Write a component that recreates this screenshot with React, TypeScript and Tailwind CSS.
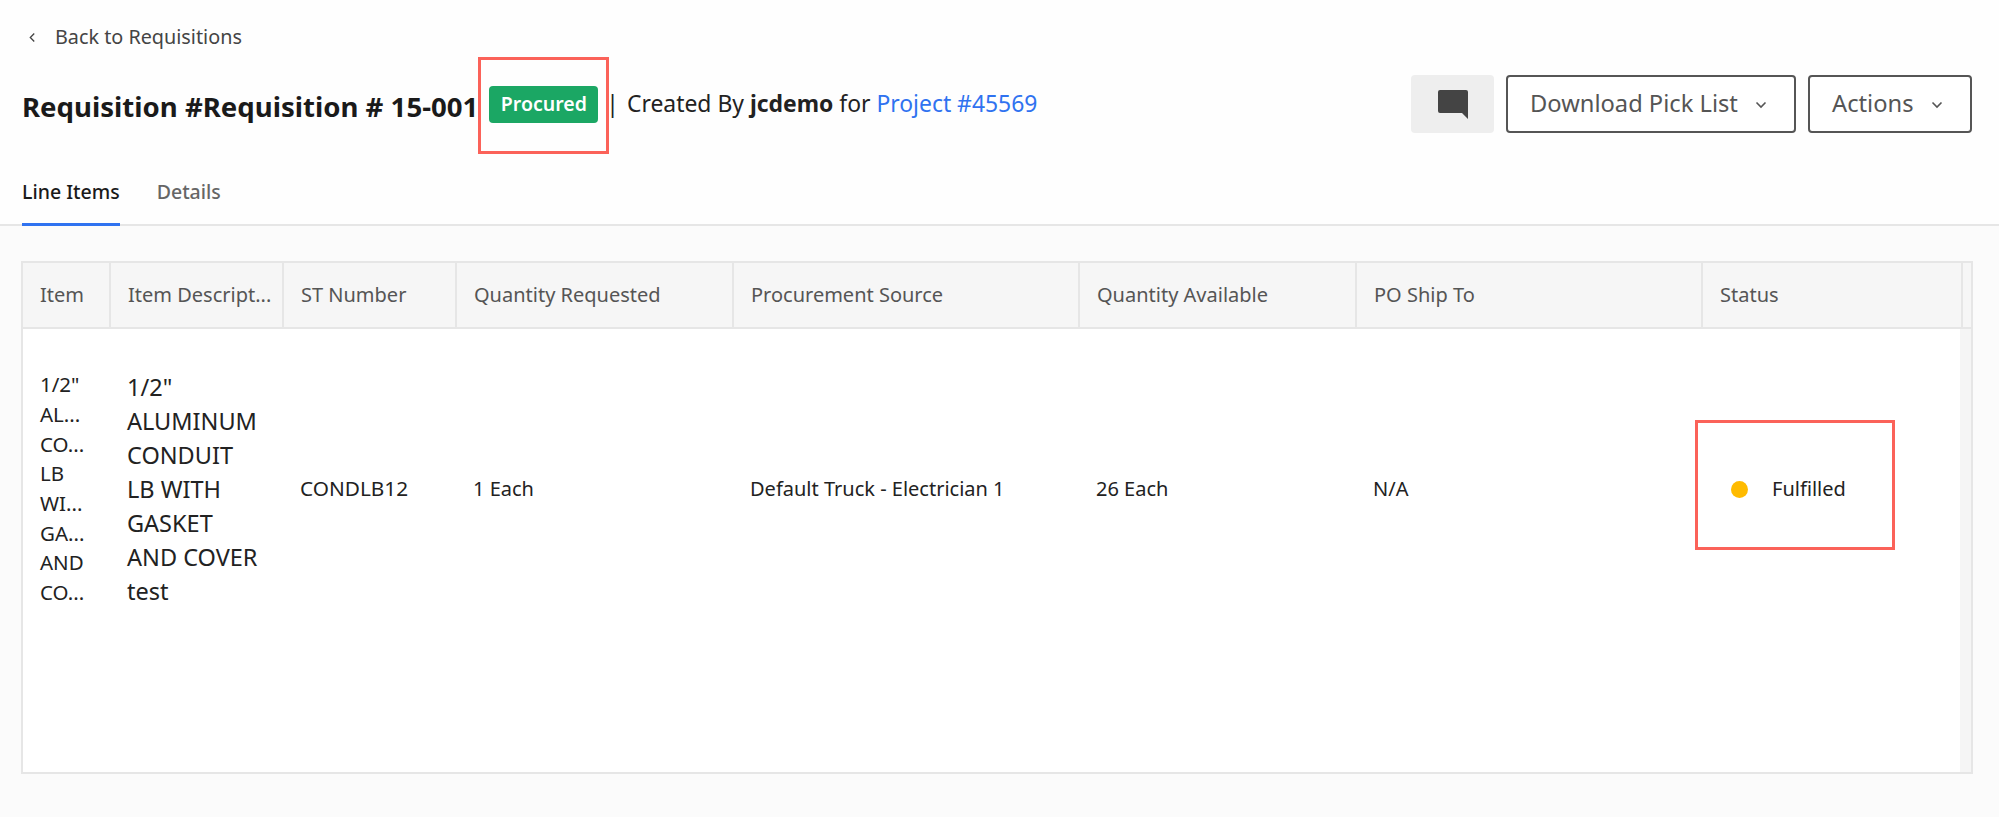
import React from "react";

const columns = [
  { label: "Item", w: "w-[88px]" },
  { label: "Item Descript...", w: "w-[173px]" },
  { label: "ST Number", w: "w-[173px]" },
  { label: "Quantity Requested", w: "w-[277px]" },
  { label: "Procurement Source", w: "w-[346px]" },
  { label: "Quantity Available", w: "w-[277px]" },
  { label: "PO Ship To", w: "w-[346px]" },
  { label: "Status", w: "w-[260px]" },
];

function Chevron({ className }: { className?: string }) {
  return (
    <svg viewBox="0 0 12 8" className={className} fill="none" stroke="currentColor" strokeWidth="1.6">
      <path d="M1.5 1.5 6 6l4.5-4.5" />
    </svg>
  );
}

export default function App() {
  return (
    <div className="h-[817px] w-[1999px] overflow-hidden bg-[#fbfbfb] font-['Noto_Sans',sans-serif]">
      <header className="h-[226px] border-b-2 border-[#e6e6e6] bg-[#fefefe] pl-[22px] pr-[27px] pt-[24px]">
        <div className="flex h-[26px] items-center text-[19.8px] text-[#444444]">
          <svg viewBox="0 0 8 12" className="ml-[7px] mr-[19px] h-[11px] w-[7px]" fill="none" stroke="currentColor" strokeWidth="1.5">
            <path d="M6 1.5 1.5 6 6 10.5" />
          </svg>
          Back to Requisitions
        </div>
        <div className="mt-[25px] flex h-[58px] items-center">
          <h1 className="mt-[6px] text-[27.6px] font-bold whitespace-nowrap text-[#1a1a1a]">Requisition #Requisition # 15-001</h1>
          <div className="relative ml-[11px]">
            <span className="flex h-[37px] w-[109px] items-center justify-center rounded-[4px] bg-[#1ba764] text-[19.5px] font-semibold text-white">
              Procured
            </span>
            <div className="absolute left-[-11px] top-[-29px] h-[97px] w-[131px] border-[3px] border-[#fb6259]" />
          </div>
          <span className="ml-[8px] text-[22.9px] text-[#222222]">|</span>
          <span className="ml-[8px] text-[22.9px] whitespace-nowrap text-[#222222]">
            Created By <b className="font-bold">jcdemo</b> for <span className="text-[#2f72f0]">Project #45569</span>
          </span>
          <div className="ml-auto flex items-center gap-[12px]">
            <button className="flex h-[58px] w-[83px] items-center justify-center rounded-[4px] bg-[#eeeeee]">
              <svg viewBox="0 0 30 29" className="h-[29px] w-[30px]" fill="#444444">
                <path d="M2 0h26a2 2 0 0 1 2 2v27l-6-6H2a2 2 0 0 1-2-2V2a2 2 0 0 1 2-2z" />
              </svg>
            </button>
            <button className="flex h-[58px] w-[290px] items-center rounded-[4px] border-2 border-[#555555] bg-white pl-[22px] text-[23.7px] text-[#555555]">
              Download Pick List
              <Chevron className="ml-[17px] mt-[2px] h-[8px] w-[12px]" />
            </button>
            <button className="flex h-[58px] w-[164px] items-center rounded-[4px] border-2 border-[#555555] bg-white pl-[22px] text-[23.7px] text-[#555555]">
              Actions
              <Chevron className="ml-[17px] mt-[2px] h-[8px] w-[12px]" />
            </button>
          </div>
        </div>
        <nav className="mt-[45px] flex h-[48px] gap-[37px] text-[19.5px] font-medium leading-[28px]">
          <span className="border-b-[3px] border-[#2f72f0] text-[#1a1a1a]">Line Items</span>
          <span className="text-[#666666]">Details</span>
        </nav>
      </header>

      <section className="ml-[21px] mt-[35px] h-[513px] w-[1952px] border-2 border-[#e6e6e6] bg-white">
        <div className="flex h-[66px] border-b-2 border-[#e6e6e6] bg-[#f6f6f6] text-[20px] text-[#555555]">
          {columns.map((c) => (
            <div key={c.label} className={`${c.w} flex items-center whitespace-nowrap border-r-2 border-[#e6e6e6] pl-[17px]`}>
              {c.label}
            </div>
          ))}
          <div className="flex-1" />
        </div>
        <div className="flex h-[443px]">
          <div className="flex-1">
            <div className="flex h-[320px] items-center text-[20px] text-[#222222]">
              <div className="w-[88px] pl-[17px] text-[20.5px] leading-[29.7px]">
                <div>1/2"</div>
                <div>AL...</div>
                <div>CO...</div>
                <div>LB</div>
                <div>WI...</div>
                <div>GA...</div>
                <div>AND</div>
                <div>CO...</div>
              </div>
              <div className="w-[173px] pl-[16px] text-[23.5px] leading-[34px]">
                <div>1/2"</div>
                <div>ALUMINUM</div>
                <div>CONDUIT</div>
                <div>LB WITH</div>
                <div>GASKET</div>
                <div>AND COVER</div>
                <div>test</div>
              </div>
              <div className="w-[173px] pl-[16px] text-[20.8px]">CONDLB12</div>
              <div className="w-[277px] pl-[16px]">1 Each</div>
              <div className="w-[346px] pl-[16px]">Default Truck - Electrician 1</div>
              <div className="w-[277px] pl-[16px]">26 Each</div>
              <div className="w-[346px] pl-[16px]">N/A</div>
              <div className="relative flex w-[249px] items-center pl-[28px]">
                <span className="h-[17px] w-[17px] rounded-full bg-[#ffbb00]" />
                <span className="ml-[24px]">Fulfilled</span>
                <div className="absolute left-[-8px] top-[-54px] h-[130px] w-[200px] border-[3px] border-[#fb6259]" />
              </div>
            </div>
          </div>
          <div className="w-[11px] bg-[#f5f5f5]" />
        </div>
      </section>
    </div>
  );
}
